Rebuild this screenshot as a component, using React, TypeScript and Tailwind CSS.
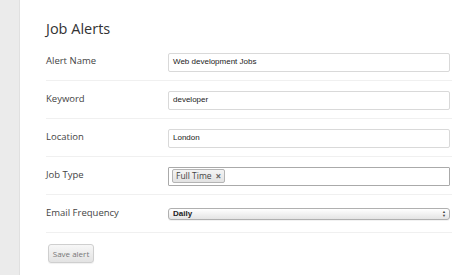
const rows = [
  { label: "Alert Name", kind: "text", value: "Web development Jobs" },
  { label: "Keyword", kind: "text", value: "developer" },
  { label: "Location", kind: "text", value: "London" },
  { label: "Job Type", kind: "tags", value: "Full Time" },
  { label: "Email Frequency", kind: "select", value: "Daily" },
];

function Field({ kind, value }: { kind: string; value: string }) {
  if (kind === "tags") {
    return (
      <div className="flex h-[19px] w-full items-center rounded-[1px] border border-[#aaaaaa] bg-white px-[3px]">
        <span className="flex h-[14px] items-center gap-[4px] rounded-[2px] border border-[#b4b4b4] bg-gradient-to-b from-[#f4f4f4] to-[#e2e2e2] px-[3px] text-[8.5px] text-[#444]">
          {value}
          <span className="text-[10px] leading-none font-bold text-[#666]">×</span>
        </span>
      </div>
    );
  }
  if (kind === "select") {
    return (
      <div className="flex h-[12px] w-full items-center justify-between rounded-[3px] border border-[#b0b0b0] bg-gradient-to-b from-white to-[#e4e4e4] pl-[4px] pr-[3px] shadow-[0_1px_0_rgba(0,0,0,0.05)]">
        <span className="text-[8px] font-bold leading-none text-[#222] [font-family:'Liberation_Sans',sans-serif]">{value}</span>
        <span className="flex flex-col text-[4px] leading-[4px] text-[#444]">
          <span>▲</span>
          <span>▼</span>
        </span>
      </div>
    );
  }
  return (
    <div className="flex h-[19px] w-full items-center rounded-[2px] border border-[#d9d9d9] bg-white px-[4px] text-[8px] text-[#222] [font-family:'Liberation_Sans',sans-serif]">
      {value}
    </div>
  );
}

export default function App() {
  return (
    <div className="flex h-[275px] w-[474px] bg-white [font-family:'Open_Sans',sans-serif]">
      <div className="w-[20px] shrink-0 border-r border-[#e0e0e0] bg-[#ebebeb]" />
      <div className="flex-1 pl-[26px] pr-[22px]">
        <h1 className="pt-[19px] text-[14.5px] leading-[20px] font-normal text-[#333]">Job Alerts</h1>
        <div className="mt-[4px]">
          {rows.map((r) => (
            <div key={r.label} className="flex h-[38px] items-center border-b border-[#f0f0f0]">
              <span className="w-[122px] shrink-0 text-[9.5px] text-[#444]">{r.label}</span>
              <div className="mr-[2px] flex-1 pt-[1px]">
                <Field kind={r.kind} value={r.value} />
              </div>
            </div>
          ))}
        </div>
        <button className="mt-[11px] ml-[2px] h-[19px] w-[46px] rounded-[3px] border border-[#cfcfcf] bg-gradient-to-b from-[#f7f7f7] to-[#e3e3e3] text-[8px] text-[#777] shadow-[0_1px_1px_rgba(0,0,0,0.06)]">
          Save alert
        </button>
      </div>
    </div>
  );
}
